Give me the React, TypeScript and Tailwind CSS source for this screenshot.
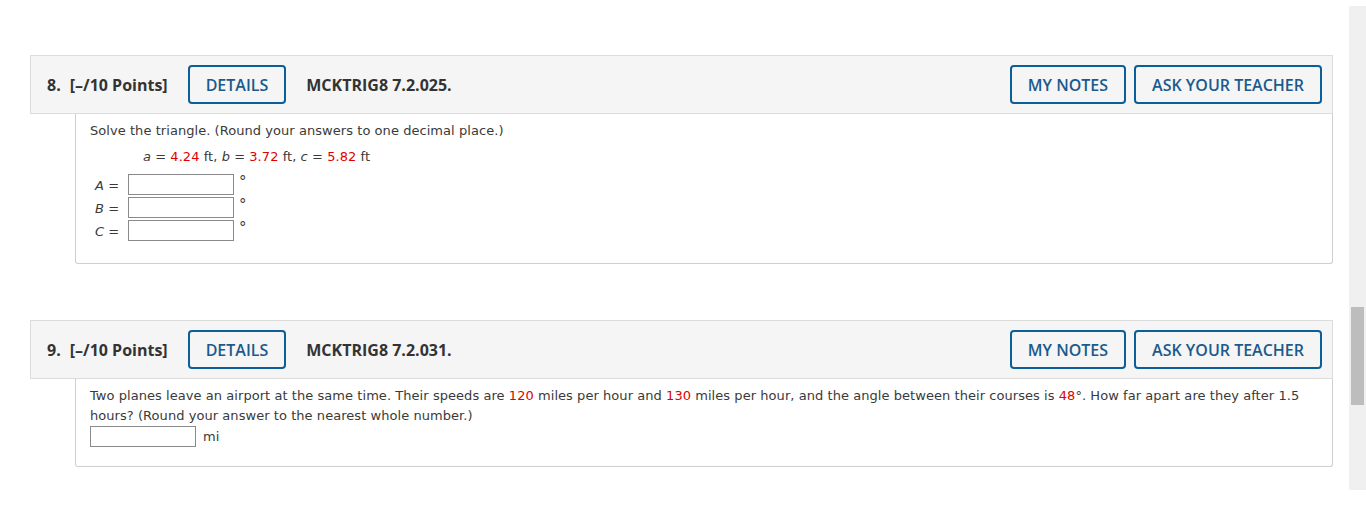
import React from "react";

const head = "font-['Open_Sans',sans-serif]";
const body = "font-['DejaVu_Sans','Verdana',sans-serif] tracking-[0.055px]";

function Btn({ label }: { label: string }) {
  return (
    <button className="h-[39px] px-[16px] border-2 border-[#0b5e98] rounded-[4px] text-[16px] font-semibold text-[#1b5a8c] bg-[#f5f5f5] leading-none">
      {label}
    </button>
  );
}

function Header({ num, code }: { num: string; code: string }) {
  return (
    <div className={`${head} h-[59px] border border-[#dcdcdc] bg-[#f5f5f5] flex items-center pl-[16px] pr-[10px] text-[#333]`}>
      <span className="text-[16px] font-bold">{num}.</span>
      <span className="ml-[9px] text-[16px] font-bold">[–/10 Points]</span>
      <div className="ml-[20px]">
        <Btn label="DETAILS" />
      </div>
      <span className="ml-[20px] text-[16px] font-bold">{code}</span>
      <div className="ml-auto flex gap-[8px]">
        <Btn label="MY NOTES" />
        <Btn label="ASK YOUR TEACHER" />
      </div>
    </div>
  );
}

const Red = ({ children }: { children: React.ReactNode }) => (
  <span className="text-[#e00000]">{children}</span>
);

function AngleRow({ v }: { v: string }) {
  return (
    <div className="flex items-start h-[23px]">
      <span className="w-[38px] pl-[5px] italic pt-[2px]">
        {v} <span className="not-italic">=</span>
      </span>
      <div className="w-[106px] h-[21px] border border-[#8a8a8a] bg-white" />
      <span className="ml-[5px] text-[15px] leading-[17px]">°</span>
    </div>
  );
}

export default function App() {
  return (
    <div className="flex h-[509px] bg-white">
      <div className="flex-1 pl-[30px] pr-[16px] pt-[55px]">
        <Header num="8" code="MCKTRIG8 7.2.025." />
        <div className={`${body} ml-[45px] h-[150px] border-x border-b border-[#cfcfcf] rounded-b-[3px] pl-[14px] pt-[7px] text-[13px] text-[#3a3a3a]`}>
          <p className="leading-[20px]">Solve the triangle. (Round your answers to one decimal place.)</p>
          <p className="leading-[20px] mt-[6px] pl-[53px]">
            <i>a</i> = <Red>4.24</Red> ft, <i>b</i> = <Red>3.72</Red> ft, <i>c</i> = <Red>5.82</Red> ft
          </p>
          <div className="mt-[7px]">
            <AngleRow v="A" />
            <AngleRow v="B" />
            <AngleRow v="C" />
          </div>
        </div>
        <div className="h-[56px]" />
        <Header num="9" code="MCKTRIG8 7.2.031." />
        <div className={`${body} ml-[45px] h-[88px] border-x border-b border-[#cfcfcf] rounded-b-[3px] pl-[14px] pr-[14px] pt-[7px] text-[13px] text-[#3a3a3a]`}>
          <p className="leading-[20px]">
            Two planes leave an airport at the same time. Their speeds are <Red>120</Red> miles per hour and <Red>130</Red> miles per hour, and the angle between their courses is <Red>48</Red>°. How far apart are they after 1.5 hours? (Round your answer to the nearest whole number.)
          </p>
          <div className="flex items-center">
            <div className="w-[106px] h-[21px] border border-[#8a8a8a] bg-white" />
            <span className="ml-[7px]">mi</span>
          </div>
        </div>
      </div>
      <div className="w-[17px] mt-[6px] mb-[19px] bg-[#f0f0f0] pt-[301px] pl-[2px] pr-[2px]">
        <div className="h-[98px] bg-[#bdbdbd]" />
      </div>
    </div>
  );
}
